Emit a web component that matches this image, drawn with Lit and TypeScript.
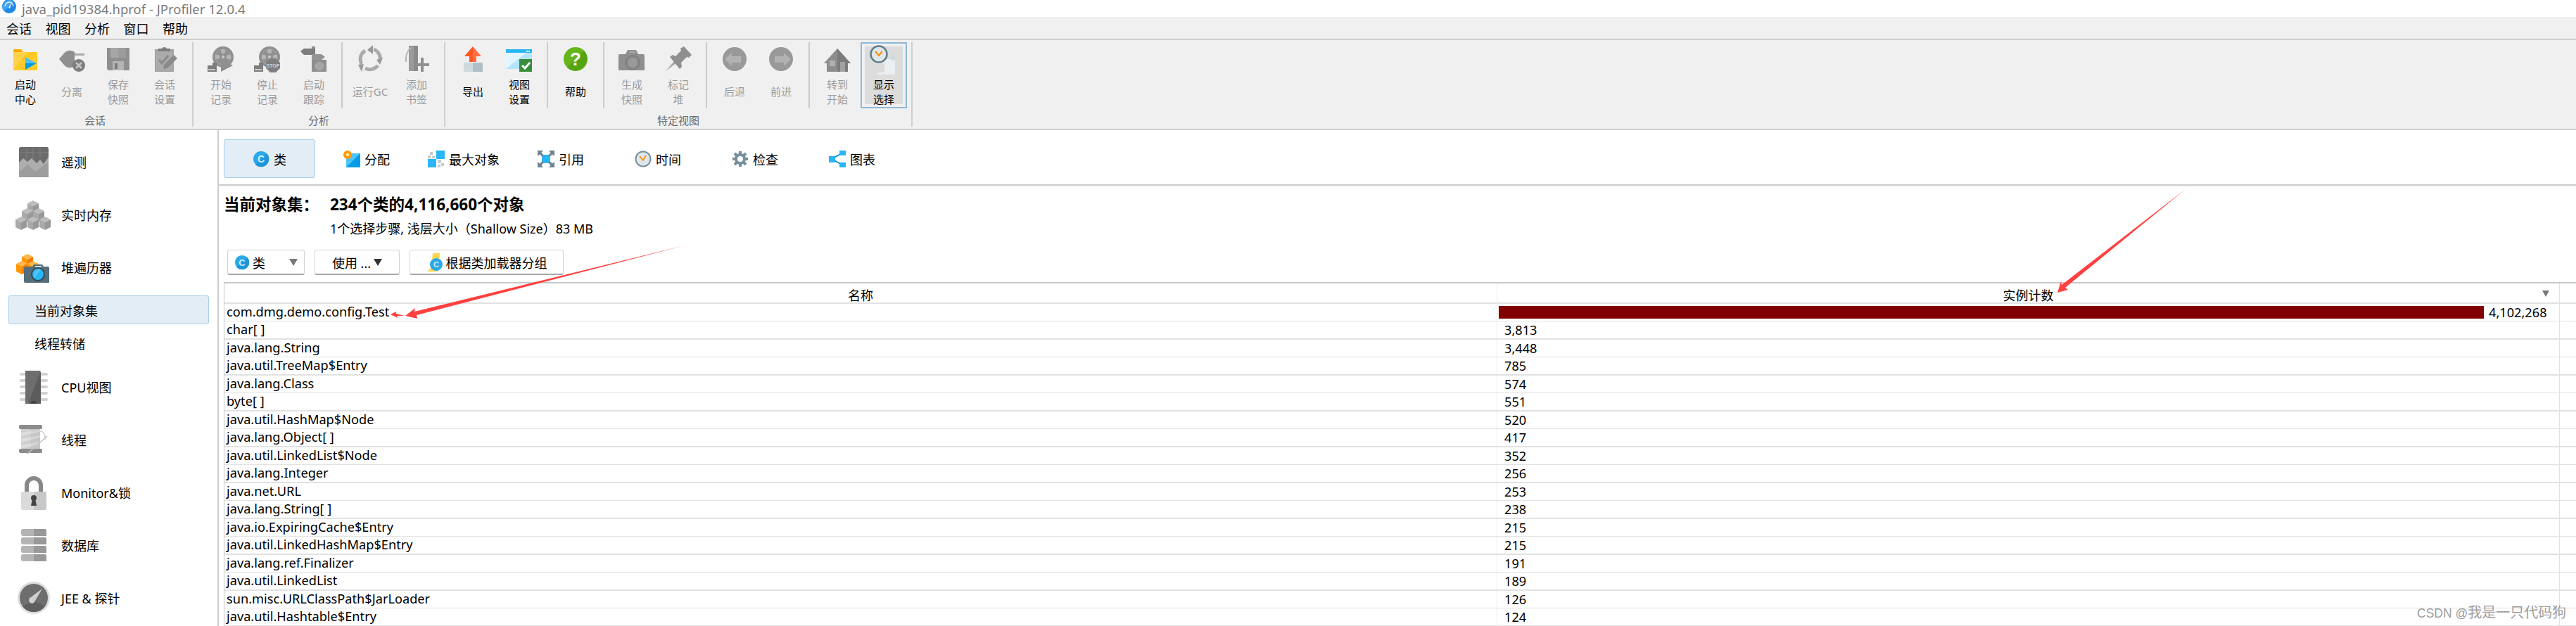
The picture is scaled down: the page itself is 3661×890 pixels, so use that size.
import { LitElement, html, css, svg } from 'lit';
import { customElement } from 'lit/decorators.js';

const G = '#8f8f8f';
const GD = '#7d7d7d';
const GL = '#ababab';

const box = (body: unknown, w = 40, h = 40) =>
  html`<svg class="ico" width=${w} height=${h} viewBox="0 0 ${w} ${h}">${body}</svg>`;

// reel used by the start / stop recording buttons
const reel = svg`
  <circle cx="23" cy="17" r="15" fill="${G}"/>
  <circle cx="23" cy="17" r="11" fill="none" stroke="#a8a8a8" stroke-width="1"/>
  <circle cx="23" cy="9" r="3.2" fill="#b5b5b5"/><circle cx="23" cy="25" r="3.2" fill="#b5b5b5"/>
  <circle cx="15" cy="17" r="3.2" fill="#b5b5b5"/><circle cx="31" cy="17" r="3.2" fill="#b5b5b5"/>
  <circle cx="23" cy="17" r="2.2" fill="#c4c4c4"/>
  <path d="M1 29h7v-4h6v13H1z" fill="${GD}"/>
  <path d="M2 34h10v2H2z" fill="#c8c8c8"/>`;

const toolIcons: Record<string, unknown> = {
  start: box(svg`
    <path d="M3 8a2 2 0 0 1 2-2h9l3 4h20v2H3z" fill="#ffa800"/>
    <rect x="3" y="10" width="34" height="26" fill="#ffd24a"/>
    <path d="M3 36 22 10h15v26z" fill="#ffca28"/>
    <path d="M20 17 36 26H20z" fill="#4fc3f7"/><path d="M20 26h16L20 35z" fill="#039be5"/>`),
  detach: box(svg`
    <path d="M2 20 8 13a11 11 0 0 1 16-3v20a11 11 0 0 1-16-3z" fill="${G}"/>
    <rect x="24" y="12" width="14" height="3" fill="${GL}"/><rect x="24" y="22" width="8" height="3" fill="${GL}"/>
    <circle cx="30" cy="29" r="9" fill="${GD}"/>
    <path d="m26 25 8 8m0-8-8 8" stroke="#c4c4c4" stroke-width="2.6"/>`),
  save: box(svg`
    <path d="M4 4h32v32H6l-2-2z" fill="${G}"/>
    <rect x="9" y="4" width="22" height="14" fill="#a6a6a6"/>
    <rect x="20" y="4" width="11" height="14" fill="#9c9c9c"/>
    <rect x="12" y="23" width="16" height="13" fill="#b4b4b4"/><rect x="15" y="26" width="4" height="8" fill="#7a7a7a"/>`),
  settings: box(svg`
    <rect x="6" y="6" width="27" height="32" fill="#a2a2a2"/>
    <rect x="8" y="9" width="23" height="27" fill="#ababab"/>
    <path d="M11 9V5h5a4 4 0 0 1 7 0h5v4z" fill="${GD}"/>
    <path d="m12 21 4 5 9-11" fill="none" stroke="#8a8a8a" stroke-width="3"/>
    <path d="m33 14 5 5-14 14-6 1 1-6z" fill="#8a8a8a"/>`),
  record: box(svg`${reel}<path d="M20 20 37 29 20 38z" fill="${G}"/>`),
  stop: box(svg`${reel}
    <path d="M24 19h8l6 6v8l-6 6h-8l-6-6v-8z" fill="#7f7f7f"/>
    <text x="28" y="32" text-anchor="middle" font-size="7" font-weight="700" fill="#cfcfcf" font-family="Liberation Sans">STOP</text>`),
  trace: box(svg`
    <rect x="17" y="2" width="5" height="36" fill="${G}"/>
    <path d="M1 9 6 5h16v9H6z" fill="${GD}"/>
    <path d="M17 13h14l5 4-5 4H17z" fill="#949494"/>
    <rect x="17" y="21" width="21" height="17" fill="${G}"/>
    <circle cx="28" cy="30" r="5.5" fill="#a4a4a4" stroke="#b4b4b4"/>`),
  gc: box(svg`
    <g fill="none" stroke="${GL}" stroke-width="5">
      <path d="M8 27A14 14 0 0 1 13 8"/><path d="M25 6a14 14 0 0 1 9 16"/><path d="M31 29a14 14 0 0 1-18 4"/>
    </g>
    <path d="m24 0-8 7 8 6zM38 18l-9 3 5 7zM8 38l3-11-8 1z" fill="#9a9a9a"/>`),
  mark: box(svg`
    <rect x="9" y="1" width="13" height="36" fill="#9b9b9b"/>
    <rect x="16" y="1" width="6" height="36" fill="#8a8a8a"/>
    <path d="M12 4C7 8 4 14 5 24" fill="none" stroke="#b5b5b5" stroke-width="2"/>
    <rect x="26" y="18" width="4" height="20" fill="${G}"/><rect x="18" y="26" width="20" height="4" fill="${G}"/>`),
  export: box(svg`
    <path d="M20 2v22h-5v-8H8z" fill="#ff5722"/><path d="M20 2v22h5v-8h7z" fill="#ff7043"/>
    <rect x="7" y="25" width="14" height="13" fill="#cfd8dc"/><rect x="20" y="25" width="14" height="13" fill="#b0bec5"/>`),
  view: box(svg`
    <rect x="1" y="6" width="37" height="28" fill="#e1f5fe"/>
    <path d="M1 34 30 11h8v23z" fill="#b3e5fc"/>
    <rect x="1" y="6" width="37" height="5" fill="#29b6f6"/>
    <rect x="30" y="8" width="2" height="2" fill="#fff"/><rect x="33" y="8" width="2" height="2" fill="#fff"/>
    <rect x="20" y="20" width="18" height="18" fill="#388e3c"/>
    <path d="m24 29 4 4 7-8" fill="none" stroke="#fff" stroke-width="3"/>`),
  help: box(svg`
    <circle cx="20" cy="20" r="17" fill="#66b51b"/>
    <path d="M32 8A17 17 0 0 1 8 32z" fill="#57a413"/>
    <text x="20" y="29" text-anchor="middle" font-size="26" font-weight="700" fill="#fff" font-family="Liberation Sans">?</text>`),
  camera: box(svg`
    <path d="M1 15a2 2 0 0 1 2-2h8l3-6h12l3 6h7a2 2 0 0 1 2 2v20a1 1 0 0 1-1 1H2a1 1 0 0 1-1-1z" fill="${G}"/>
    <rect x="16" y="9" width="9" height="2" fill="#aaa"/>
    <circle cx="21" cy="25" r="11" fill="#838383"/><circle cx="21" cy="25" r="7.5" fill="#999"/>`),
  pin: box(svg`
    <path d="M2 37 15 22l3 3z" fill="#a6a6a6"/>
    <path d="M8 17 12 14l4 2 8-8-1-3 5-3 11 12-4 4-3-1-8 8 1 6-3 3z" fill="${G}"/>`),
  back: box(svg`
    <circle cx="20" cy="20" r="17" fill="#999"/>
    <path d="M6 20 16 11v5h13v9H16v5z" fill="#b2b2b2"/>`),
  forward: box(svg`
    <circle cx="20" cy="20" r="17" fill="#999"/>
    <path d="M34 20 24 11v5H11v9h13v5z" fill="#b2b2b2"/>`),
  home: box(svg`
    <path d="M20 5 1 26h4v12h30V26h4z" fill="#8d8d8d"/>
    <path d="M20 5v33h15V26h4z" fill="#7b7b7b"/>
    <rect x="9" y="22" width="8" height="8" fill="#b0b0b0"/><rect x="24" y="24" width="7" height="14" fill="#a2a2a2"/>`),
  select: box(svg`
    <path d="M9 20h27v22H12l-1-2 10-2V26H9z" fill="#eceff1"/>
    <rect x="30" y="14" width="6" height="8" rx="3" fill="#cfd8dc"/>
    <circle cx="13" cy="13" r="11.5" fill="#e0e7ea" stroke="#607d8b" stroke-width="2.5"/>
    <path d="m8 9 5 6 5-6" fill="none" stroke="#fb8c00" stroke-width="2"/>`),
};

const cube = (x: number, y: number, c = ['#bdbdbd', '#a9a9a9', '#999']) => svg`
  <path d="M${x} ${y + 4}l8-4 8 4-8 4z" fill="${c[0]}"/>
  <path d="M${x} ${y + 4}l8 4v11l-8-4z" fill="${c[1]}"/>
  <path d="M${x + 16} ${y + 4}l-8 4v11l8-4z" fill="${c[2]}"/>`;

const orange = ['#ffb74d', '#ff9800', '#f57c00'];

const navIcons: Record<string, unknown> = {
  telemetry: box(svg`
    <rect x="1" y="1" width="42" height="43" rx="3" fill="#aeaeae"/>
    <path d="M1 36 14 26l10 10 19-14v22H1z" fill="#9d9d9d"/>
    <path d="M1 4a3 3 0 0 1 3-3h36a3 3 0 0 1 3 3v11l-7 10-5-6-5 5-7-7-6 5-6-5-6 6z" fill="#6c6c6c"/>
    <path d="M12 1v17M21 1v17M31 1v15M1 9h42" stroke="#808080"/>`, 44, 44),
  live: box(svg`
    ${cube(15, 3)}${cube(7, 14)}${cube(23, 14)}${cube(-2, 26)}${cube(15, 26)}${cube(32, 26)}`, 48, 46),
  heap: box(svg`
    ${cube(6, 4, orange)}${cube(-2, 14, orange)}${cube(14, 14, orange)}
    <path d="M9 25a3 3 0 0 1 3-3h9l2-3h12l2 3h6a2 2 0 0 1 2 2v20a1 1 0 0 1-1 1H11a2 2 0 0 1-2-2z" fill="#546e7a"/>
    <rect x="25" y="21" width="9" height="2" fill="#cfd8dc"/>
    <circle cx="29" cy="33" r="10" fill="#37474f"/><circle cx="29" cy="33" r="8" fill="#29b6f6"/>
    <path d="M24 38a8 8 0 0 1 9-12z" fill="#4fc3f7"/>`, 46, 46),
  cpu: box(svg`
    <g fill="#d2d2d2"><rect x="2" y="4" width="40" height="4" rx="2"/><rect x="2" y="13" width="40" height="4" rx="2"/>
    <rect x="2" y="22" width="40" height="4" rx="2"/><rect x="2" y="31" width="40" height="4" rx="2"/><rect x="2" y="40" width="40" height="4" rx="2"/></g>
    <path d="M10 1h18l-2 4 2-4h3v47H10z" fill="#6e6e6e"/><path d="M32 1v47H14z" fill="#5c5c5c"/>
    <path d="M18 48a4 4 0 0 1 8 0z" fill="#3f3f3f"/>`, 44, 48),
  thread: box(svg`
    <rect x="4" y="6" width="27" height="31" fill="#cfcfcf"/>
    <path d="M4 13 31 9v3L4 18zM4 22l27-5v3L4 27zM4 31l27-5v3L4 36z" fill="#dedede"/>
    <rect x="18" y="6" width="13" height="31" fill="#000" opacity=".04"/>
    <rect x="1" y="2" width="33" height="6" rx="2" fill="#8c8c8c"/><rect x="1" y="36" width="33" height="6" rx="2" fill="#8c8c8c"/>
    <path d="M12 44 41 18" stroke="#c0c0c0" stroke-width="1.6"/>
    <path d="M31 11c7 0 8 10 7 12" fill="none" stroke="#cfcfcf" stroke-width="1.5"/>`, 44, 46),
  lock: box(svg`
    <path d="M8 26V15a10 10 0 0 1 20 0v11" transform="translate(4 0)" fill="none" stroke="#888" stroke-width="6"/>
    <rect x="4" y="24" width="36" height="26" rx="2" fill="#dadada"/>
    <path d="M22 24h16a2 2 0 0 1 2 2v22a2 2 0 0 1-2 2H22z" fill="#c8c8c8"/>
    <circle cx="22" cy="33" r="4" fill="#444"/><path d="M20 34h4l2 10h-8z" fill="#444"/>`, 44, 50),
  db: box(svg`
    <rect x="4" y="1" width="36" height="10" rx="3" fill="#b4b4b4"/><path d="M22 1h15a3 3 0 0 1 3 3v7H22z" fill="#999"/>
    <rect x="4" y="13" width="36" height="10" rx="3" fill="#b4b4b4"/><path d="M22 13h15a3 3 0 0 1 3 3v7H22z" fill="#999"/>
    <rect x="4" y="25" width="36" height="10" rx="3" fill="#b4b4b4"/><path d="M22 25h15a3 3 0 0 1 3 3v7H22z" fill="#999"/>
    <rect x="4" y="37" width="36" height="10" rx="3" fill="#b4b4b4"/><path d="M22 37h15a3 3 0 0 1 3 3v7H22z" fill="#999"/>`, 44, 48),
  probe: box(svg`
    <circle cx="22" cy="22" r="23" fill="#dcdcdc"/><circle cx="22" cy="22" r="20" fill="#6e6e6e"/>
    <path d="M6 34a20 20 0 0 0 32 0L22 26z" fill="#5e5e5e"/>
    <path d="M34 9 24 26a4.500 4.500 0 1 1-6-5z" fill="#cfcfcf"/>`, 44, 44),
};

const classIcon = (size = 24) => html`<svg class="ico" width=${size} height=${size} viewBox="0 0 24 24">
  <circle cx="12" cy="12" r="11" fill="#29a9e8"/>
  <path d="M20 4A11 11 0 0 1 4 20z" fill="#1e96dc"/>
  <text x="12" y="17" text-anchor="middle" font-size="14" font-weight="700" fill="#cfeeff" font-family="Liberation Sans">C</text>
</svg>`;

const clockTab = svg`
  <circle cx="12" cy="12" r="10.500" fill="#e0e7ea" stroke="#78909c" stroke-width="2"/>
  <path d="m7 8 5 6 4-7" fill="none" stroke="#fb8c00" stroke-width="1.800"/>`;

const tabIcons: Record<string, unknown> = {
  class: classIcon(),
  alloc: box(svg`
    <rect x="4" y="4" width="20" height="20" fill="#039be5"/><path d="M4 24V4h20z" fill="#4fc3f7"/>
    <circle cx="6" cy="6" r="6" fill="#ff9800"/><circle cx="6" cy="6" r="2.500" fill="#ffe082"/>`, 24, 24),
  big: box(svg`
    <rect x="12" y="0" width="12" height="12" fill="#29b6f6"/><rect x="0" y="12" width="12" height="12" fill="#29b6f6"/>
    <g fill="#c4ccd0"><rect x="3" y="2" width="4" height="4"/><rect x="0" y="7" width="4" height="4"/><rect x="6" y="8" width="4" height="3"/>
    <rect x="14" y="13" width="5" height="5"/><rect x="19" y="18" width="4" height="4"/><rect x="14" y="20" width="4" height="4"/></g>`, 24, 24),
  refs: box(svg`
    <rect x="6" y="6" width="12" height="12" fill="#29b6f6"/>
    <g fill="#6f8591"><path d="M0 0h8L5.500 3 9 7 7 9 3 5.500 0 8z"/><path d="M24 0h-8l2.500 3L15 7l2 2 4-3.500L24 8z"/>
    <path d="M0 24h8l-2.500-3L9 17l-2-2-4 3.500L0 16z"/><path d="M24 24h-8l2.500-3-3.500-4 2-2 4 3.500 3-2.500z"/></g>`, 24, 24),
  time: box(clockTab, 24, 24),
  inspect: box(svg`
    <g stroke="#78909c" stroke-width="4"><path d="M12 1v22M1 12h22M4 4l16 16M20 4 4 20"/></g>
    <circle cx="12" cy="12" r="8" fill="#78909c"/><circle cx="12" cy="12" r="4" fill="#fff"/>`, 24, 24),
  graph: box(svg`
    <path d="M4 12 20 3M4 12l16 9" stroke="#0288d1" stroke-width="2"/>
    <rect x="0" y="8" width="9" height="9" fill="#29b6f6"/><rect x="15" y="0" width="9" height="7" fill="#29b6f6"/><rect x="15" y="17" width="9" height="7" fill="#29b6f6"/>`, 24, 24),
};

interface Tool { icon: string; label: string[]; on?: boolean; active?: boolean }
type Cluster = Tool[];
interface Group { label?: string; clusters: Cluster[] }

const groups: Group[] = [
  { label: '会话', clusters: [[
    { icon: 'start', label: ['启动', '中心'], on: true },
    { icon: 'detach', label: ['分离'] },
    { icon: 'save', label: ['保存', '快照'] },
    { icon: 'settings', label: ['会话', '设置'] },
  ]] },
  { label: '分析', clusters: [[
    { icon: 'record', label: ['开始', '记录'] },
    { icon: 'stop', label: ['停止', '记录'] },
    { icon: 'trace', label: ['启动', '跟踪'] },
  ], [
    { icon: 'gc', label: ['运行GC'] },
    { icon: 'mark', label: ['添加', '书签'] },
  ]] },
  { label: '特定视图', clusters: [[
    { icon: 'export', label: ['导出'], on: true },
    { icon: 'view', label: ['视图', '设置'], on: true },
  ], [
    { icon: 'help', label: ['帮助'], on: true },
  ], [
    { icon: 'camera', label: ['生成', '快照'] },
    { icon: 'pin', label: ['标记', '堆'] },
  ], [
    { icon: 'back', label: ['后退'] },
    { icon: 'forward', label: ['前进'] },
  ], [
    { icon: 'home', label: ['转到', '开始'] },
    { icon: 'select', label: ['显示', '选择'], on: true, active: true },
  ]] },
];

const tabs = [
  ['class', '类'], ['alloc', '分配'], ['big', '最大对象'], ['refs', '引用'],
  ['time', '时间'], ['inspect', '检查'], ['graph', '图表'],
];

const rows: [string, number][] = [
  ['com.dmg.demo.config.Test', 4102268], ['char[ ]', 3813], ['java.lang.String', 3448],
  ['java.util.TreeMap$Entry', 785], ['java.lang.Class', 574], ['byte[ ]', 551],
  ['java.util.HashMap$Node', 520], ['java.lang.Object[ ]', 417], ['java.util.LinkedList$Node', 352],
  ['java.lang.Integer', 256], ['java.net.URL', 253], ['java.lang.String[ ]', 238],
  ['java.io.ExpiringCache$Entry', 215], ['java.util.LinkedHashMap$Entry', 215],
  ['java.lang.ref.Finalizer', 191], ['java.util.LinkedList', 189],
  ['sun.misc.URLClassPath$JarLoader', 126], ['java.util.Hashtable$Entry', 124],
];

const MAX_BAR = 1400;

@customElement('app-root')
export class AppRoot extends LitElement {
  static styles = css`
    :host {
      display: block;
      position: relative;
      width: 3661px;
      height: 890px;
      overflow: hidden;
      background: #fff;
      color: #000;
      font-family: 'Noto Sans', 'Noto Sans CJK SC', sans-serif;
    }
    .ico { display: block; overflow: visible; flex: none; }

    /* title + menu */
    .title {
      display: flex;
      gap: 8px;
      height: 24px;
      overflow: hidden;
      padding-left: 3px;
      font-size: 18.500px;
      line-height: 25px;
      color: #7a7a7a;
    }
    .title svg { margin-top: -1px; }
    .menu {
      display: flex;
      gap: 19.5px;
      height: 31px;
      padding-left: 9px;
      background: #f0f0f0;
      font-size: 18px;
      line-height: 34px;
      border-bottom: 2px solid #cdcdcd;
    }

    /* ribbon */
    .ribbon {
      display: flex;
      box-sizing: border-box;
      height: 128px;
      padding: 3px 0 3px 3px;
      background: #f0f0f0;
      border-bottom: 2px solid #d0d0d0;
    }
    .group { display: flex; flex-direction: column; height: 120px; }
    .group-sep { width: 2px; height: 120px; margin: 0 6px; background: #cfcfcf; flex: none; }
    .clusters { display: flex; height: 94px; }
    .cluster { display: flex; }
    .cluster-sep { width: 2px; height: 94px; margin: 0 6px; background: #cbcbcb; flex: none; }
    .group-label {
      height: 26px;
      line-height: 34px;
      font-size: 15px;
      text-align: center;
      color: #6b6b6b;
    }
    .tool {
      box-sizing: border-box;
      display: flex;
      flex-direction: column;
      align-items: center;
      width: 66px;
      height: 94px;
      padding: 4px 0 2px;
      font-size: 15px;
      line-height: 21px;
      text-align: center;
      color: #9b9b9b;
    }
    .tool.on { color: #000; }
    .tool.active {
      background: #dcdcdc;
      box-shadow: inset 0 0 0 2px #8fb8d8, inset 0 0 0 6px #f0f0f0;
    }
    .tool-label {
      flex: 1;
      display: flex;
      flex-direction: column;
      justify-content: center;
      margin-top: 5px;
    }

    /* body */
    .body { display: flex; height: 705px; }
    .side {
      box-sizing: border-box;
      width: 311px;
      padding-top: 7px;
      border-right: 2px solid #cdcdcd;
      flex: none;
    }
    .nav {
      display: flex;
      align-items: center;
      gap: 17px;
      height: 75px;
      padding-left: 26px;
      font-size: 18px;
    }
    .nav-icon { width: 44px; display: flex; justify-content: center; }
    .sub {
      box-sizing: border-box;
      display: flex;
      align-items: center;
      width: 285px;
      height: 41px;
      margin: 6px 0 0 12px;
      padding-left: 36px;
      font-size: 18px;
      border: 1px solid transparent;
      border-radius: 3px;
    }
    .sub.sel { margin-top: 3px; background: #e3edf6; border-color: #a9cfe9; }
    .sub + .nav { margin-top: 4px; }

    .main { flex: 1; min-width: 0; }
    .tabs {
      display: flex;
      gap: 8px;
      padding: 13px 0 9px 7px;
      border-bottom: 2px solid #cdcdcd;
      box-shadow: 0 1px 0 #f0f0f0;
    }
    .tab {
      box-sizing: border-box;
      display: flex;
      align-items: center;
      justify-content: center;
      gap: 6px;
      width: 130px;
      height: 55px;
      font-size: 18px;
      border: 1px solid transparent;
      border-radius: 3px;
    }
    .tab.sel { background: #e3edf6; border-color: #a9cfe9; }

    .head {
      display: grid;
      grid-template-columns: 151px 1fr;
      row-gap: 7px;
      margin: 12px 0 0 7px;
    }
    .head b { font-size: 22.500px; line-height: 30px; font-weight: 700; white-space: nowrap; }
    .head .info { grid-column: 2; font-size: 18px; line-height: 24px; }

    .actions { display: flex; gap: 14px; margin: 18px 0 0 12px; }
    .btn {
      box-sizing: border-box;
      display: flex;
      align-items: center;
      height: 36px;
      gap: 4px;
      font-size: 18px;
      background: #fff;
      border: 1px solid #d2d2d2;
      border-bottom: 2px solid #a8a8a8;
      border-radius: 3px;
    }
    .combo { width: 110px; padding: 0 9px; }
    .combo .caret { margin-left: auto; border-top-color: #777; }
    .use { width: 121px; justify-content: center; }
    .loader { width: 219px; justify-content: center; }
    .caret {
      width: 0;
      height: 0;
      border-left: 6px solid transparent;
      border-right: 6px solid transparent;
      border-top: 10px solid #333;
    }

    /* table */
    .table {
      margin: 10px 0 0 7px;
      border-top: 2px solid #c8c8c8;
      border-left: 1px solid #c8c8c8;
    }
    .row {
      box-sizing: border-box;
      display: grid;
      grid-template-columns: 1809px 1510px 1fr;
      height: 25px;
      font-size: 18.200px;
      line-height: 23px;
      border-bottom: 1px solid #e2e2e2;
    }
    .row:nth-child(odd) { height: 26px; border-bottom-width: 2px; }
    .row.header { height: 29px; font-size: 18px; line-height: 34px; border-bottom: 2px solid #e2e2e2; }
    .name { padding-left: 3px; border-right: 1px solid #ececec; white-space: nowrap; }
    .count {
      display: flex;
      align-items: center;
      gap: 7px;
      padding-left: 10px;
      border-right: 1px solid #e2e2e2;
    }
    .count.first { padding-left: 2px; }
    .bar { height: 18px; background: #800000; flex: none; }
    .header .name, .header .count { padding: 0; text-align: center; }
    .header .count { display: grid; grid-template-columns: 1fr auto 1fr; gap: 0; }
    .sort {
      justify-self: end;
      margin: 0 14px 6px 0;
      width: 0;
      height: 0;
      border-left: 5px solid transparent;
      border-right: 5px solid transparent;
      border-top: 9px solid #777;
    }

    /* screenshot annotations, on top of everything */
    .marks { position: absolute; left: 0; top: 0; pointer-events: none; }
    .watermark {
      position: absolute;
      left: 3435px;
      top: 856px;
      font-family: 'Liberation Sans', 'Noto Sans CJK SC', sans-serif;
      font-size: 20px;
      line-height: 30px;
      white-space: nowrap;
      color: #9d9d9d;
    }
    .watermark span { font-size: 17.500px; }
  `;

  renderTool(t: Tool) {
    return html`<div class="tool ${t.on ? 'on' : ''} ${t.active ? 'active' : ''}">
      ${toolIcons[t.icon]}
      <div class="tool-label">${t.label.map((l) => html`<div>${l}</div>`)}</div>
    </div>`;
  }

  renderGroup(g: Group) {
    return html`<div class="group">
      <div class="clusters">
        ${g.clusters.map((c, i) => html`
          ${i ? html`<div class="cluster-sep"></div>` : ''}
          <div class="cluster">${c.map((t) => this.renderTool(t))}</div>`)}
      </div>
      <div class="group-label">${g.label}</div>
    </div>`;
  }

  renderNav(icon: string, label: string) {
    return html`<div class="nav"><div class="nav-icon">${navIcons[icon]}</div><span>${label}</span></div>`;
  }

  render() {
    return html`
      <div class="title">
        <svg class="ico" width="20" height="20" viewBox="0 0 20 20">
          <circle cx="10" cy="10" r="10" fill="#1e88e5"/>
          <path d="M3 17A10 10 0 0 1 17 3z" fill="#42a5f5"/>
          <path d="M4 10a6 6 0 0 1 12 0" fill="none" stroke="#e3f2fd" stroke-width="1.500"/>
          <path d="m14 4-5 8 2 1z" fill="#fff"/>
        </svg>
        <span>java_pid19384.hprof - JProfiler 12.0.4</span>
      </div>
      <div class="menu">
        ${['会话', '视图', '分析', '窗口', '帮助'].map((m) => html`<span>${m}</span>`)}
      </div>
      <div class="ribbon">
        ${groups.map((g, i) => html`${i ? html`<div class="group-sep"></div>` : ''}${this.renderGroup(g)}`)}
        <div class="group-sep"></div>
      </div>
      <div class="body">
        <div class="side">
          ${this.renderNav('telemetry', '遥测')}
          ${this.renderNav('live', '实时内存')}
          ${this.renderNav('heap', '堆遍历器')}
          <div class="sub sel">当前对象集</div>
          <div class="sub">线程转储</div>
          ${this.renderNav('cpu', 'CPU视图')}
          ${this.renderNav('thread', '线程')}
          ${this.renderNav('lock', 'Monitor&锁')}
          ${this.renderNav('db', '数据库')}
          ${this.renderNav('probe', 'JEE & 探针')}
        </div>
        <div class="main">
          <div class="tabs">
            ${tabs.map(([icon, label], i) => html`
              <div class="tab ${i === 0 ? 'sel' : ''}">${tabIcons[icon]}<span>${label}</span></div>`)}
          </div>
          <div class="head">
            <b>当前对象集：</b>
            <b>234个类的4,116,660个对象</b>
            <div class="info">1个选择步骤, 浅层大小（Shallow Size）83 MB</div>
          </div>
          <div class="actions">
            <div class="btn combo">${classIcon(22)}<span>类</span><i class="caret"></i></div>
            <div class="btn use"><span>使用 ...</span><i class="caret"></i></div>
            <div class="btn loader">
              <svg class="ico" width="24" height="28" viewBox="0 0 24 28">
                <path d="M9 1h10l-2 26H1l6-6z" fill="#ffd54f"/>
                <circle cx="14" cy="17" r="9" fill="#29a9e8"/>
                <text x="14" y="21" text-anchor="middle" font-size="11" font-weight="700" fill="#cfeeff" font-family="Liberation Sans">C</text>
              </svg>
              <span>根据类加载器分组</span>
            </div>
          </div>
          <div class="table">
            <div class="row header">
              <div class="name">名称</div>
              <div class="count"><span></span><span>实例计数</span><i class="sort"></i></div>
              <div></div>
            </div>
            ${rows.map(([name, n], i) => html`
              <div class="row">
                <div class="name">${name}</div>
                <div class="count ${i === 0 ? 'first' : ''}">
                  ${i === 0 ? html`<div class="bar" style="width:${MAX_BAR}px"></div>` : ''}
                  <span>${n.toLocaleString('en-US')}</span>
                </div>
                <div></div>
              </div>`)}
          </div>
        </div>
      </div>
      <svg class="marks" width="3661" height="890" viewBox="0 0 3661 890">
        <g fill="#ff4040">
          <path d="M576 449 590 438 589 443 973 349 592 448 593 453z"/>
          <path d="M555 447 563 443 563 446 575 449 564 449 565 452z"/>
          <path d="M2924 416 2929 400 2930 405 3106 269 2935 409 2939 412z"/>
        </g>
      </svg>
      <div class="watermark"><span>CSDN @</span>我是一只代码狗</div>
    `;
  }
}
